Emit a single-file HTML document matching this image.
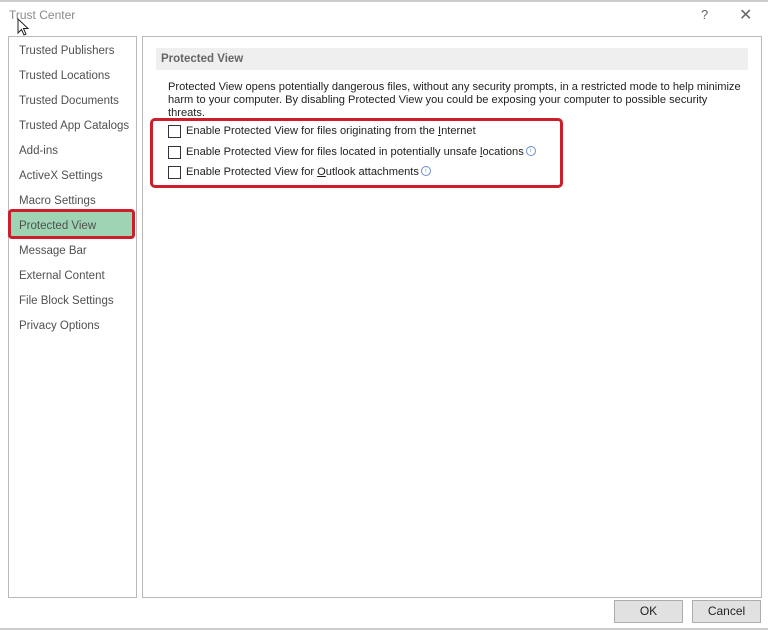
<!DOCTYPE html>
<html><head><style>
body{margin:0;width:768px;height:630px;background:#fff;font-family:"Liberation Sans",sans-serif;position:relative;overflow:hidden;color:#444}
.a{position:absolute}
.nav{position:absolute;left:19px;font-size:11.5px;color:#505050}
.cb{position:absolute;left:168px;width:11px;height:11px;border:1px solid #333;background:#fff}
.lbl{position:absolute;left:186px;font-size:11.1px;color:#222;white-space:nowrap}
.i{display:inline-block;width:8px;height:8px;border:1px solid #6a8fd0;border-radius:50%;font-size:6px;line-height:8px;text-align:center;color:#6a8fd0;vertical-align:3px;margin-left:2px}
.btn{position:absolute;top:600px;height:21px;border:1px solid #adadad;background:#e1e1e1;font-size:12px;text-align:center;line-height:21px;color:#222}
.p{position:absolute;left:168px;font-size:11.1px;color:#222;white-space:nowrap}
</style></head><body>
<div class="a" style="left:0;top:0;width:768px;height:2px;background:#ccc"></div>
<div class="a" style="left:9px;top:8px;font-size:12px;color:#8a8a8a">Trust Center</div>
<div class="a" style="left:701px;top:7px;font-size:13px;color:#666">?</div>
<div class="a" style="left:739px;top:5px;font-size:16px;color:#666">✕</div>
<svg class="a" style="left:17px;top:18px" width="14" height="20"><path d="M1 1 L1 15 L4.5 11.5 L7 17 L9 16 L6.5 10.5 L11 10.5 Z" fill="#fff" stroke="#222" stroke-width="1"/></svg>
<div class="a" style="left:8px;top:36px;width:127px;height:560px;border:1px solid #b9b9b9"></div>
<div class="a" style="left:142px;top:36px;width:618px;height:560px;border:1px solid #b9b9b9"></div>
<div class="nav" style="top:45px">Trusted Publishers</div>
<div class="nav" style="top:70px">Trusted Locations</div>
<div class="nav" style="top:95px">Trusted Documents</div>
<div class="nav" style="top:120px">Trusted App Catalogs</div>
<div class="nav" style="top:145px">Add-ins</div>
<div class="nav" style="top:170px">ActiveX Settings</div>
<div class="nav" style="top:195px">Macro Settings</div>
<div class="a" style="left:8px;top:209px;width:121px;height:24px;border:3px solid #cc1f2a;border-radius:4px;background:#9ed3b3"></div>
<div class="nav" style="top:220px">Protected View</div>
<div class="nav" style="top:245px">Message Bar</div>
<div class="nav" style="top:270px">External Content</div>
<div class="nav" style="top:295px">File Block Settings</div>
<div class="nav" style="top:320px">Privacy Options</div>
<div class="a" style="left:156px;top:48px;width:592px;height:22px;background:#efefef"></div>
<div class="a" style="left:161px;top:53px;font-size:11.5px;font-weight:bold;color:#666">Protected View</div>
<div class="p" style="top:81px">Protected View opens potentially dangerous files, without any security prompts, in a restricted mode to help minimize</div>
<div class="p" style="top:94px">harm to your computer. By disabling Protected View you could be exposing your computer to possible security</div>
<div class="a" style="left:168px;top:107px;width:100px;height:10px;overflow:hidden"><div class="p" style="left:0;top:0">threats.</div></div>
<div class="a" style="left:150px;top:118px;width:407px;height:64px;border:3px solid #cc1f2a;border-radius:5px"></div>
<div class="cb" style="top:125px"></div><div class="lbl" style="top:125px">Enable Protected View for files originating from the <u>I</u>nternet</div>
<div class="cb" style="top:146px"></div><div class="lbl" style="top:146px">Enable Protected View for files located in potentially unsafe <u>l</u>ocations<span class="i">i</span></div>
<div class="cb" style="top:166px"></div><div class="lbl" style="top:166px">Enable Protected View for <u>O</u>utlook attachments<span class="i">i</span></div>
<div class="btn" style="left:614px;width:67px">OK</div>
<div class="btn" style="left:692px;width:67px">Cancel</div>
<div class="a" style="left:0;top:628px;width:768px;height:2px;background:#ccc"></div>
</body></html>
